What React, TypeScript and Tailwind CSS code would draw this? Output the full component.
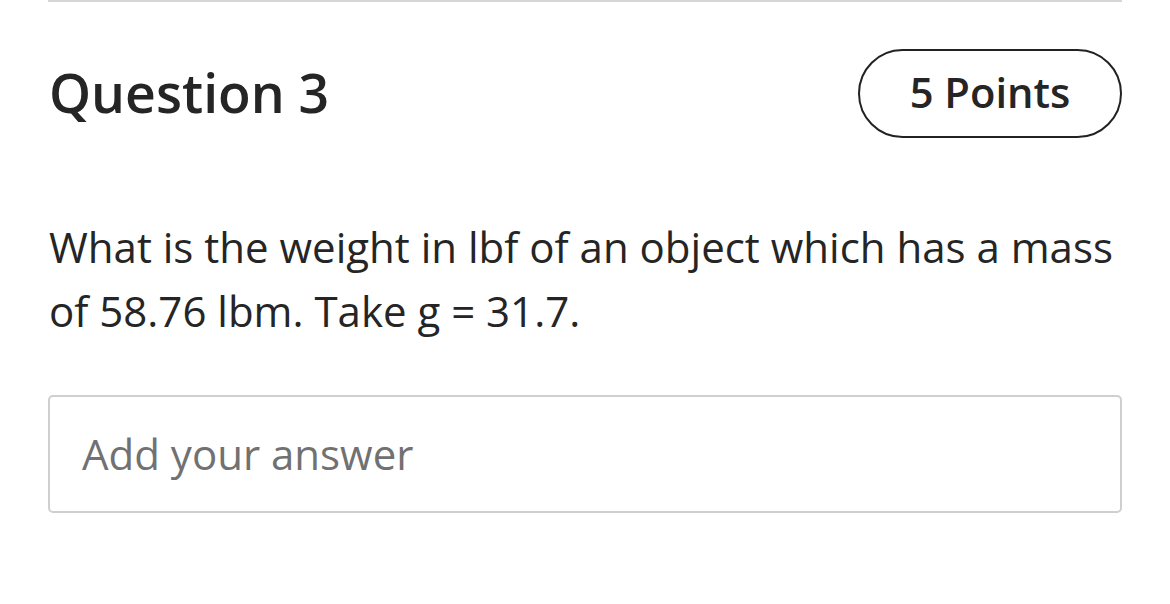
import React from "react";

export default function App() {
  return (
    <div
      className="w-[1170px] h-[604px] bg-white px-[48px] text-[#252525]"
      style={{ fontFamily: '"Open Sans", sans-serif' }}
    >
      <div className="h-[2px] bg-[#d6d6d6]" />
      <div className="mt-[47px] flex items-center justify-between">
        <h2 className="pl-[1px] text-[53.5px] font-semibold leading-normal">Question 3</h2>
        <div className="flex h-[89px] w-[264px] items-center justify-center rounded-full border-[2.5px] border-[#222222] pb-[2px] text-[41.7px] font-semibold">
          5 Points
        </div>
      </div>
      <p className="mt-[77px] pl-[1px] text-[42px] leading-[64px]">
        What is the weight in lbf of an object which has a mass of 58.76 lbm. Take g = 31.7.
      </p>
      <div className="mt-[52px] flex h-[118px] items-center rounded-[5px] border-2 border-[#cfcfcf] pl-[32px]">
        <span className="pb-[2px] text-[42px] text-[#717171]">Add your answer</span>
      </div>
    </div>
  );
}
